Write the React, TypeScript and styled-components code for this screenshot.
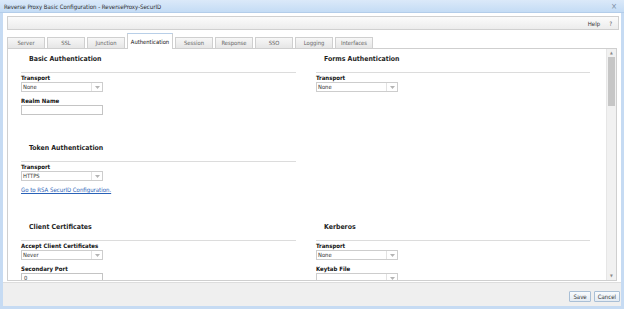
import React from 'react';
import styled, { createGlobalStyle } from 'styled-components';

const GlobalStyle = createGlobalStyle`
  html, body {
    margin: 0;
    padding: 0;
    background: #ffffff;
    overflow: hidden;
  }
  * {
    box-sizing: border-box;
  }
`;

const FONT = `'DejaVu Sans Condensed', 'DejaVu Sans', 'Liberation Sans', sans-serif`;

const tabs = [
  'Server',
  'SSL',
  'Junction',
  'Authentication',
  'Session',
  'Response',
  'SSO',
  'Logging',
  'Interfaces',
];

type FieldDef = {
  label: string;
  kind: 'select' | 'input';
  value?: string;
};

type SectionDef = {
  title: string;
  fields: FieldDef[];
  link?: string;
};

function Select({ value }: { value?: string }) {
  return (
    <StyledSelect>
      <span className="value">{value}</span>
      <span className="arrow">
        <svg width="5" height="3" viewBox="0 0 5 3">
          <path d="M0 0 L5 0 L2.5 3 Z" fill="#b5b5b5" />
        </svg>
      </span>
    </StyledSelect>
  );
}

function Section({ section }: { section: SectionDef }) {
  return (
    <StyledSection>
      <StyledSectionTitle>{section.title}</StyledSectionTitle>
      <StyledSectionBody>
        {section.fields.map((f) => (
          <StyledField key={f.label}>
            <StyledLabel>{f.label}</StyledLabel>
            {f.kind === 'select' ? (
              <Select value={f.value} />
            ) : (
              <StyledInput>{f.value}</StyledInput>
            )}
          </StyledField>
        ))}
        {section.link && <StyledLink href="#">{section.link}</StyledLink>}
      </StyledSectionBody>
    </StyledSection>
  );
}

const basic: SectionDef = {
  title: 'Basic Authentication',
  fields: [
    { label: 'Transport', kind: 'select', value: 'None' },
    { label: 'Realm Name', kind: 'input' },
  ],
};
const forms: SectionDef = {
  title: 'Forms Authentication',
  fields: [{ label: 'Transport', kind: 'select', value: 'None' }],
};
const token: SectionDef = {
  title: 'Token Authentication',
  fields: [{ label: 'Transport', kind: 'select', value: 'HTTPS' }],
  link: 'Go to RSA SecurID Configuration.',
};
const client: SectionDef = {
  title: 'Client Certificates',
  fields: [
    { label: 'Accept Client Certificates', kind: 'select', value: 'Never' },
    { label: 'Secondary Port', kind: 'input', value: '0' },
  ],
};
const kerberos: SectionDef = {
  title: 'Kerberos',
  fields: [
    { label: 'Transport', kind: 'select', value: 'None' },
    { label: 'Keytab File', kind: 'select' },
  ],
};

export default function App() {
  return (
    <>
      <GlobalStyle />
      <StyledWindow>
        <StyledTitleBar>
          <span>Reverse Proxy Basic Configuration - ReverseProxy-SecurID</span>
          <span className="close">×</span>
        </StyledTitleBar>
        <StyledBody>
          <StyledToolbar>
            <span>Help</span>
            <span className="q">?</span>
          </StyledToolbar>
          <StyledTabBar>
            {tabs.map((t) => (
              <StyledTab key={t} $active={t === 'Authentication'}>
                {t}
              </StyledTab>
            ))}
          </StyledTabBar>
          <StyledPanel>
            <StyledContent>
              <Section section={basic} />
              <Section section={forms} />
              <Section section={token} />
              <div />
              <Section section={client} />
              <Section section={kerberos} />
            </StyledContent>
            <StyledScrollbar>
              <span className="arrow">▲</span>
              <span className="thumb" />
              <span className="track" />
              <span className="arrow">▼</span>
            </StyledScrollbar>
          </StyledPanel>
        </StyledBody>
        <StyledFooter>
          <StyledButton>Save</StyledButton>
          <StyledButton>Cancel</StyledButton>
        </StyledFooter>
      </StyledWindow>
    </>
  );
}

const StyledWindow = styled.div`
  width: 624px;
  height: 309px;
  display: flex;
  flex-direction: column;
  background: #ffffff;
  border: 3px solid #c6dbf3;
  border-top: none;
  font-family: ${FONT};
  color: #222;
`;

const StyledTitleBar = styled.div`
  height: 13px;
  margin: 0 -3px;
  padding: 0 7px 0 4px;
  display: flex;
  align-items: center;
  justify-content: space-between;
  background: linear-gradient(#dbe9f9, #c4dcf5);
  border-bottom: 1px solid #b3cdea;
  font-size: 6px;
  color: #2b2b2b;

  .close {
    font-size: 8px;
    color: #7d8fa5;
  }
`;

const StyledBody = styled.div`
  flex: 1;
  min-height: 0;
  display: flex;
  flex-direction: column;
  padding: 3px 2px 0 4px;
`;

const StyledToolbar = styled.div`
  height: 14px;
  display: flex;
  align-items: center;
  justify-content: flex-end;
  gap: 9px;
  padding-right: 6px;
  background: linear-gradient(#fbfbfb, #ececec);
  border: 1px solid #d0d0d0;
  font-size: 6px;
  color: #333;

  .q {
    color: #555;
  }
`;

const StyledTabBar = styled.div`
  margin-top: 4px;
  height: 15px;
  display: flex;
  align-items: flex-end;
  gap: 2px;
  position: relative;
  z-index: 1;
`;

const StyledTab = styled.div<{ $active?: boolean }>`
  width: ${(p) => (p.$active ? '46px' : '38px')};
  height: ${(p) => (p.$active ? '16px' : '12px')};
  display: flex;
  align-items: center;
  justify-content: center;
  font-size: 5.8px;
  color: ${(p) => (p.$active ? '#111' : '#666')};
  background: ${(p) =>
    p.$active ? '#ffffff' : 'linear-gradient(#f7f7f7, #e6e6e6)'};
  border: 1px solid #cfcfcf;
  border-top-color: ${(p) => (p.$active ? '#b8cfe8' : '#cfcfcf')};
  border-bottom: ${(p) => (p.$active ? 'none' : '1px solid #cfcfcf')};
`;

const StyledPanel = styled.div`
  flex: 1;
  min-height: 0;
  margin-top: -1px;
  width: 610px;
  display: flex;
  border: 1px solid #cfcfcf;
  overflow: hidden;
`;

const StyledContent = styled.div`
  flex: 1;
  padding: 3px 0 0 13px;
  display: grid;
  grid-template-columns: 275px 274px;
  grid-auto-rows: min-content;
  column-gap: 20px;
  row-gap: 26px;
  overflow: hidden;
`;

const StyledSection = styled.div`
  display: flex;
  flex-direction: column;
`;

const StyledSectionTitle = styled.div`
  height: 21px;
  padding: 2px 0 0 8px;
  line-height: 10px;
  font-size: 6.9px;
  font-weight: 700;
  color: #1e1e1e;
  border-bottom: 1px solid #dcdcdc;
`;

const StyledSectionBody = styled.div`
  padding-top: 1px;
  display: flex;
  flex-direction: column;
  gap: 5px;
`;

const StyledField = styled.div`
  display: flex;
  flex-direction: column;
`;

const StyledLabel = styled.div`
  line-height: 8px;
  height: 8px;
  font-size: 6px;
  font-weight: 700;
  color: #111;
`;

const StyledSelect = styled.div`
  width: 82px;
  height: 10px;
  display: flex;
  border: 1px solid #cdcdcd;
  background: #fff;
  font-size: 5.8px;
  color: #333;

  .value {
    flex: 1;
    line-height: 8px;
    padding-left: 1px;
  }
  .arrow {
    width: 11px;
    display: flex;
    align-items: center;
    justify-content: center;
    border-left: 1px solid #e2e2e2;
  }
`;

const StyledInput = styled.div`
  width: 82px;
  height: 10px;
  border: 1px solid #c4c4c4;
  background: #fff;
  font-size: 5.8px;
  line-height: 9px;
  padding-left: 2px;
  color: #333;
`;

const StyledLink = styled.a`
  line-height: 8px;
  font-size: 6px;
  color: #2a62b8;
  text-decoration: underline;
`;

const StyledScrollbar = styled.div`
  width: 10px;
  display: flex;
  flex-direction: column;
  background: #f1f1f1;
  border-left: 1px solid #e6e6e6;

  .arrow {
    height: 8px;
    font-size: 4px;
    line-height: 8px;
    text-align: center;
    color: #8a8a8a;
  }
  .thumb {
    height: 49px;
    margin: 0 1px;
    background: #c6c6c6;
  }
  .track {
    flex: 1;
  }
`;

const StyledFooter = styled.div`
  height: 24px;
  margin: 1px 0 0;
  display: flex;
  align-items: center;
  justify-content: flex-end;
  gap: 3px;
  padding: 4px 1px 0 0;
  background: #efefef;
  border-top: 1px solid #dddddd;
`;

const StyledButton = styled.button`
  height: 11px;
  padding: 0 3px;
  font-family: ${FONT};
  font-size: 6px;
  line-height: 9px;
  color: #333;
  background: linear-gradient(#f9fbfd, #e3ebf3);
  border: 1px solid #a9bfd6;
  border-radius: 1px;
`;
